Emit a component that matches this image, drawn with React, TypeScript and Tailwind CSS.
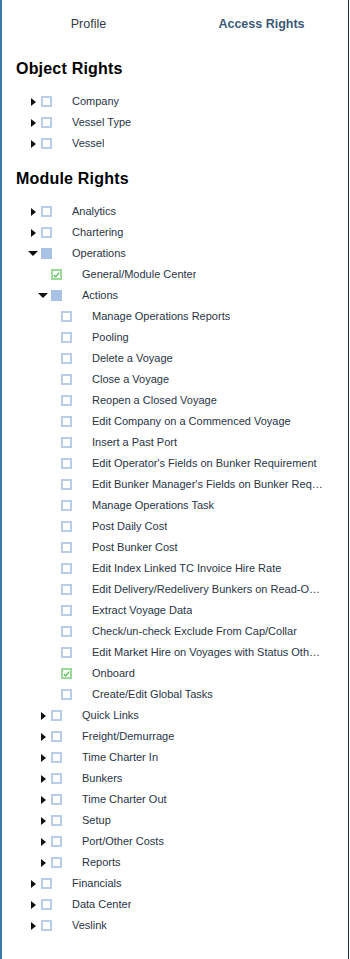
import React from "react";

type Check = "none" | "partial" | "checked";
type Node = {
  label: string;
  level: number;
  toggle?: "open" | "closed";
  check?: Check;
};

const objectRights: Node[] = [
  { label: "Company", level: 1, toggle: "closed" },
  { label: "Vessel Type", level: 1, toggle: "closed" },
  { label: "Vessel", level: 1, toggle: "closed" },
];

const actions = [
  "Manage Operations Reports",
  "Pooling",
  "Delete a Voyage",
  "Close a Voyage",
  "Reopen a Closed Voyage",
  "Edit Company on a Commenced Voyage",
  "Insert a Past Port",
  "Edit Operator's Fields on Bunker Requirement",
  "Edit Bunker Manager's Fields on Bunker Requirement",
  "Manage Operations Task",
  "Post Daily Cost",
  "Post Bunker Cost",
  "Edit Index Linked TC Invoice Hire Rate",
  "Edit Delivery/Redelivery Bunkers on Read-Only Voyages",
  "Extract Voyage Data",
  "Check/un-check Exclude From Cap/Collar",
  "Edit Market Hire on Voyages with Status Other Than Scheduled",
];

const moduleRights: Node[] = [
  { label: "Analytics", level: 1, toggle: "closed" },
  { label: "Chartering", level: 1, toggle: "closed" },
  { label: "Operations", level: 1, toggle: "open", check: "partial" },
  { label: "General/Module Center", level: 2, check: "checked" },
  { label: "Actions", level: 2, toggle: "open", check: "partial" },
  ...actions.map((a) => ({ label: a, level: 3 } as Node)),
  { label: "Onboard", level: 3, check: "checked" },
  { label: "Create/Edit Global Tasks", level: 3 },
  { label: "Quick Links", level: 2, toggle: "closed" },
  { label: "Freight/Demurrage", level: 2, toggle: "closed" },
  { label: "Time Charter In", level: 2, toggle: "closed" },
  { label: "Bunkers", level: 2, toggle: "closed" },
  { label: "Time Charter Out", level: 2, toggle: "closed" },
  { label: "Setup", level: 2, toggle: "closed" },
  { label: "Port/Other Costs", level: 2, toggle: "closed" },
  { label: "Reports", level: 2, toggle: "closed" },
  { label: "Financials", level: 1, toggle: "closed" },
  { label: "Data Center", level: 1, toggle: "closed" },
  { label: "Veslink", level: 1, toggle: "closed" },
];

function CheckBox({ state }: { state: Check }) {
  if (state === "partial") {
    return <span className="block w-[11px] h-[11px] bg-[#a9c1e5] shrink-0" />;
  }
  if (state === "checked") {
    return (
      <span className="flex items-center justify-center w-[11px] h-[11px] border-2 border-[#9ad99a] bg-white shrink-0">
        <svg width="8" height="8" viewBox="0 0 8 8">
          <path d="M1 4.2 L3.1 6.3 L7 1.2" fill="none" stroke="#3cb43c" strokeWidth="1.3" />
        </svg>
      </span>
    );
  }
  return <span className="block w-[11px] h-[11px] border-2 border-[#b9cce9] bg-white shrink-0" />;
}

function Toggle({ t }: { t?: "open" | "closed" }) {
  return (
    <span className="flex items-center justify-center w-[12px] h-[12px] shrink-0">
      {t === "closed" && (
        <span className="block w-0 h-0 border-y-[4px] border-y-transparent border-l-[5px] border-l-[#111]" />
      )}
      {t === "open" && (
        <span className="block w-0 h-0 border-x-[5px] border-x-transparent border-t-[5px] border-t-[#111]" />
      )}
    </span>
  );
}

const pad: Record<number, string> = {
  1: "pl-[25px]",
  2: "pl-[35px]",
  3: "pl-[45px]",
};

function Row({ n }: { n: Node }) {
  return (
    <div className={`flex items-center h-[21px] ${pad[n.level]}`}>
      <Toggle t={n.toggle} />
      <span className="w-[2px] shrink-0" />
      <CheckBox state={n.check ?? "none"} />
      <span className="ml-[20px] min-w-0 truncate text-[11px] leading-[21px] text-[#283445]">
        {n.label}
      </span>
    </div>
  );
}

export default function App() {
  return (
    <div
      className="w-[350px] h-[959px] bg-white"
      style={{ fontFamily: '"Liberation Sans", Arial, sans-serif' }}
    >
      <div className="w-[349px] h-[959px] border-l-2 border-l-[#3d79a6] border-r border-r-[#1f2b47] overflow-hidden">
        <div className="flex h-[47px] pt-[2px] items-center">
          <div className="flex-1 text-center text-[12.5px] text-[#333a44]">Profile</div>
          <div className="flex-1 text-center text-[12.5px] font-bold text-[#3c5a78]">Access Rights</div>
        </div>
        <div className="mt-[12px] pl-[14px] h-[20px] leading-[20px] text-[16px] font-bold tracking-[0.2px] text-black">
          Object Rights
        </div>
        <div className="mt-[12px] pr-[24px]">
          {objectRights.map((n, i) => (
            <Row key={i} n={n} />
          ))}
        </div>
        <div className="mt-[15px] pl-[14px] h-[20px] leading-[20px] text-[16px] font-bold tracking-[0.2px] text-black">
          Module Rights
        </div>
        <div className="mt-[12px] pr-[24px]">
          {moduleRights.map((n, i) => (
            <Row key={i} n={n} />
          ))}
        </div>
      </div>
    </div>
  );
}
